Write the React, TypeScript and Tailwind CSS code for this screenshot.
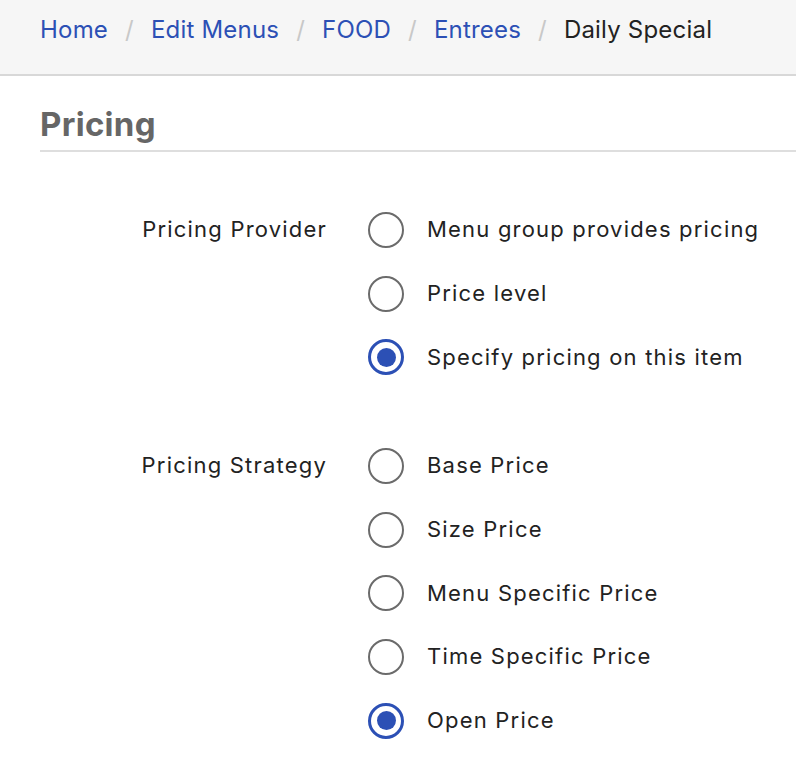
import React from 'react';

const crumbs = ['Home', 'Edit Menus', 'FOOD', 'Entrees'];

type Group = { label: string; options: string[]; selected: number };

const groups: Group[] = [
    {
        label: 'Pricing Provider',
        options: ['Menu group provides pricing', 'Price level', 'Specify pricing on this item'],
        selected: 2,
    },
    {
        label: 'Pricing Strategy',
        options: ['Base Price', 'Size Price', 'Menu Specific Price', 'Time Specific Price', 'Open Price'],
        selected: 4,
    },
];

function Radio({ checked }: { checked: boolean }) {
    if (checked) {
        return (
            <span className="flex items-center justify-center w-[36px] h-[36px] rounded-full border-[3px] border-[#2c50b5] shrink-0">
                <span className="w-[19px] h-[19px] rounded-full bg-[#2c50b5]" />
            </span>
        );
    }
    return <span className="w-[36px] h-[36px] rounded-full border-2 border-[#6b6b6b] shrink-0" />;
}

export default function App() {
    return (
        <div className="min-h-[778px] bg-white font-['Inter',sans-serif] text-[#222]">
            <nav className="h-[76px] bg-[#f6f6f6] border-b-2 border-[#d8d8d8] px-10 flex items-center pb-[14px] text-[24px] tracking-[0.2px]">
                {crumbs.map((c) => (
                    <React.Fragment key={c}>
                        <a className="text-[#2c50b5]">{c}</a>
                        <span className="text-[#c8c8c8] mx-[17px]">/</span>
                    </React.Fragment>
                ))}
                <span className="text-[#222]">Daily Special</span>
            </nav>

            <div className="pl-10">
                <h2 className="pt-[28px] pb-[6px] text-[33px] font-bold tracking-[0.3px] text-[#666] border-b-2 border-[#dedede] leading-[40px]">
                    Pricing
                </h2>

                <div className="pt-[46px] flex flex-col gap-[45px]">
                    {groups.map((g) => (
                        <div key={g.label} className="grid grid-cols-[287px_1fr] gap-x-[41px]">
                            <div className="text-right text-[22px] tracking-[1.2px] h-[63.7px] flex items-center justify-end">
                                {g.label}
                            </div>
                            <div className="flex flex-col">
                                {g.options.map((o, i) => (
                                    <label key={o} className="h-[63.7px] flex items-center gap-[23px] text-[22px] tracking-[1.2px]">
                                        <Radio checked={i === g.selected} />
                                        <span>{o}</span>
                                    </label>
                                ))}
                            </div>
                        </div>
                    ))}
                </div>
            </div>
        </div>
    );
}
